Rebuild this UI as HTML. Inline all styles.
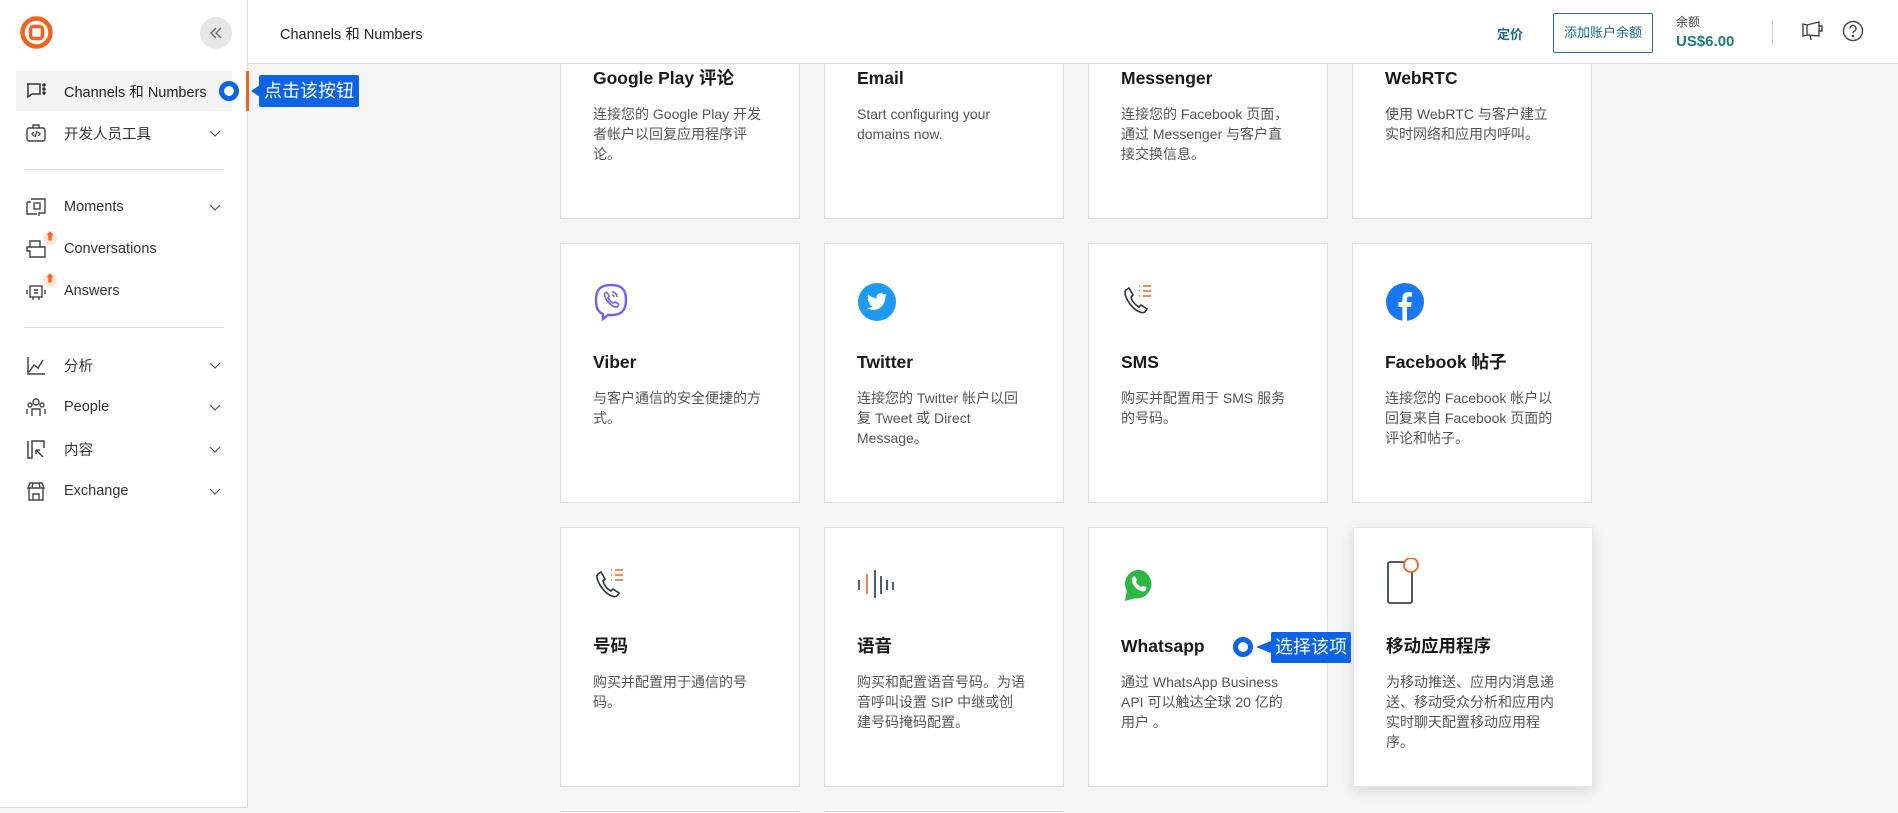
<!DOCTYPE html>
<html style="width:1898px;height:813px;overflow:hidden"><head><meta charset="utf-8"><style>
*{box-sizing:border-box;margin:0;padding:0}
body{width:1898px;height:813px;overflow:hidden;background:#f6f6f6;font-family:"Liberation Sans","Noto Sans CJK SC",sans-serif;color:#222;position:relative}
.side{position:absolute;left:0;top:0;width:248px;height:808px;background:#fff;border-right:1px solid #ddd;border-bottom:1px solid #ddd}
.hdr{position:absolute;left:248px;top:0;right:0;height:64px;background:#fff;border-bottom:1px solid #ddd;z-index:2}
.item{position:absolute;left:16px;width:216px;height:40px;display:flex;align-items:center;font-size:14.5px;color:#333}
.item svg.ic{position:absolute;left:9px;width:22px;height:22px}
.item span{position:absolute;left:48px}
.item .chev{position:absolute;left:192px;width:14px;height:14px}
.div{position:absolute;left:24px;width:200px;height:1px;background:#ddd}
.card{position:absolute;width:240px;height:260px;background:#fff;border:1px solid #ddd;padding:0 32px;overflow:hidden}
.card h3{position:absolute;left:32px;font-size:17.5px;line-height:22px;font-weight:bold;color:#1a1a1a;white-space:nowrap}
.card p{position:absolute;left:32px;width:170px;font-size:14px;line-height:20px;color:#555}
.card svg{position:absolute;left:32px}
</style></head><body>
<div class="side">
 <svg style="position:absolute;left:20px;top:16px" width="33" height="33" viewBox="0 0 33 33"><circle cx="16.5" cy="16.5" r="14" fill="none" stroke="#f26322" stroke-width="4.5"/><rect x="10.5" y="10.5" width="12" height="12" rx="3" fill="none" stroke="#f26322" stroke-width="3.5"/></svg>
 <div style="position:absolute;left:200px;top:17px;width:32px;height:32px;border-radius:50%;background:#e6e6e6"></div>
 <svg style="position:absolute;left:208px;top:25px" width="16" height="16" viewBox="0 0 16 16" fill="none" stroke="#666" stroke-width="1.3"><path d="M8 3L3 8l5 5M13 3L8 8l5 5"/></svg>
 <div class="item" style="top:71px;background:#f3f3f3"><svg class="ic" viewBox="0 0 22 22" fill="none" stroke="#333" stroke-width="1.5"><path d="M2 4h13v10H7l-4 3V4z"/><circle cx="19" cy="5" r="1" fill="#333"/><circle cx="19" cy="9" r="1" fill="#333"/><circle cx="19" cy="13" r="1" fill="#333"/></svg><span style="color:#222">Channels 和 Numbers</span></div>
 <div class="item" style="top:113px"><svg class="ic" viewBox="0 0 22 22" fill="none" stroke="#444" stroke-width="1.4"><rect x="2" y="6" width="18" height="13" rx="2"/><path d="M8 6V3h6v3M9 10l-2 2 2 2M13 10l2 2-2 2M12 9l-2 6"/></svg><span>开发人员工具</span><svg class="chev" viewBox="0 0 14 14" fill="none" stroke="#555" stroke-width="1.2"><path d="M2 5l5 5 5-5"/></svg></div>
 <div class="div" style="top:169px"></div>
 <div class="item" style="top:187px"><svg class="ic" viewBox="0 0 22 22" fill="none" stroke="#444" stroke-width="1.4"><path d="M6 3h14v14h-6v3M2 6h4M2 6v12h10"/><rect x="9" y="7" width="6" height="6"/></svg><span>Moments</span><svg class="chev" viewBox="0 0 14 14" fill="none" stroke="#555" stroke-width="1.2"><path d="M2 5l5 5 5-5"/></svg></div>
 <div class="item" style="top:229px"><svg class="ic" viewBox="0 0 22 22" fill="none" stroke="#444" stroke-width="1.4"><path d="M5 3h10v6H5zM2 9h18v10H5v-6H2z"/></svg><span>Conversations</span></div>
 <div style="position:absolute;left:43px;top:231px;width:14px;height:14px;border-radius:50%;background:#fde5da;color:#f26322;font-size:10px;text-align:center;line-height:13px">⬆</div>
 <div class="item" style="top:271px"><svg class="ic" viewBox="0 0 22 22" fill="none" stroke="#444" stroke-width="1.4"><rect x="5" y="6" width="12" height="11"/><path d="M2 10v4M20 10v4M8 17v3M14 17v3M9 10h4M9 13h4"/></svg><span>Answers</span></div>
 <div style="position:absolute;left:43px;top:273px;width:14px;height:14px;border-radius:50%;background:#fde5da;color:#f26322;font-size:10px;text-align:center;line-height:13px">⬆</div>
 <div class="div" style="top:327px"></div>
 <div class="item" style="top:345px"><svg class="ic" viewBox="0 0 22 22" fill="none" stroke="#444" stroke-width="1.5"><path d="M3 3v17h17M4 18l5-7 4 3 5-8"/></svg><span>分析</span><svg class="chev" viewBox="0 0 14 14" fill="none" stroke="#555" stroke-width="1.2"><path d="M2 5l5 5 5-5"/></svg></div>
 <div class="item" style="top:387px"><svg class="ic" viewBox="0 0 22 22" fill="none" stroke="#444" stroke-width="1.4"><circle cx="11" cy="6" r="3"/><circle cx="5" cy="9" r="2"/><circle cx="17" cy="9" r="2"/><path d="M7 20v-7h8v7M2 18v-5M20 18v-5"/></svg><span>People</span><svg class="chev" viewBox="0 0 14 14" fill="none" stroke="#555" stroke-width="1.2"><path d="M2 5l5 5 5-5"/></svg></div>
 <div class="item" style="top:429px"><svg class="ic" viewBox="0 0 22 22" fill="none" stroke="#444" stroke-width="1.5"><path d="M3 3v17h4V3h12v7M11 12l7 7M11 12h4M11 12v4"/></svg><span>内容</span><svg class="chev" viewBox="0 0 14 14" fill="none" stroke="#555" stroke-width="1.2"><path d="M2 5l5 5 5-5"/></svg></div>
 <div class="item" style="top:471px"><svg class="ic" viewBox="0 0 22 22" fill="none" stroke="#444" stroke-width="1.4"><path d="M3 8l2-5h12l2 5zM4 8v12h14V8M8 20v-6h6v6M8 3l-1 5M14 3l1 5"/></svg><span>Exchange</span><svg class="chev" viewBox="0 0 14 14" fill="none" stroke="#555" stroke-width="1.2"><path d="M2 5l5 5 5-5"/></svg></div>
</div>
<div class="hdr">
 <div style="position:absolute;left:32px;top:23px;font-size:14.5px;color:#222">Channels 和 Numbers</div>
 <div style="position:absolute;left:1249px;top:24px;font-size:13px;font-weight:bold;color:#1f6786">定价</div>
 <div style="position:absolute;left:1305px;top:13px;width:100px;height:40px;border:1.5px solid #2a6f8a;border-radius:2px;font-size:13px;color:#1f6786;text-align:center;line-height:37px">添加账户余额</div>
 <div style="position:absolute;left:1428px;top:13px;font-size:12px;color:#444">余额</div>
 <div style="position:absolute;left:1428px;top:33px;font-size:15px;font-weight:bold;color:#1d7a7a">US$6.00</div>
 <div style="position:absolute;left:1524px;top:21px;width:1px;height:24px;background:#ccc"></div>
 <svg style="position:absolute;left:1553px;top:20px" width="24" height="22" viewBox="0 0 24 22" fill="none" stroke="#444" stroke-width="1.4"><path d="M2 4v12l4-1V5zM6 5l12-3v14L6 15M18 6h3v5h-3M9 15l1 5"/></svg>
 <svg style="position:absolute;left:1594px;top:20px" width="22" height="22" viewBox="0 0 22 22" fill="none" stroke="#444" stroke-width="1.4"><circle cx="11" cy="11" r="9.5"/><path d="M8 8.5a3 3 0 1 1 4 2.8c-.8.4-1 1-1 2"/><circle cx="11" cy="16" r=".6" fill="#444"/></svg>
</div>
<!-- callout 1 -->
<div style="position:absolute;left:246px;top:71px;width:3px;height:40px;background:#f26322"></div>
<div style="position:absolute;left:219px;top:81px;width:20px;height:20px;border-radius:50%;border:5px solid #0b63e5;background:#fff"></div>
<div style="position:absolute;left:251px;top:85px;width:0;height:0;border-top:6px solid transparent;border-bottom:6px solid transparent;border-right:9px solid #0b63e5"></div>
<div style="position:absolute;left:259px;top:75px;width:100px;height:32px;background:#0b63e5;border-radius:2px;color:#fff;font-size:18px;line-height:32px;text-align:center">点击该按钮</div>

<!-- row 1 -->
<div class="card" style="left:560px;top:64px;height:155px;border-top:none"><h3 style="top:3px">Google Play 评论</h3><p style="top:40px">连接您的 Google Play 开发者帐户以回复应用程序评论。</p></div>
<div class="card" style="left:824px;top:64px;height:155px;border-top:none"><h3 style="top:3px">Email</h3><p style="top:40px">Start configuring your domains now.</p></div>
<div class="card" style="left:1088px;top:64px;height:155px;border-top:none"><h3 style="top:3px">Messenger</h3><p style="top:40px">连接您的 Facebook 页面，通过 Messenger 与客户直接交换信息。</p></div>
<div class="card" style="left:1352px;top:64px;height:155px;border-top:none"><h3 style="top:3px">WebRTC</h3><p style="top:40px">使用 WebRTC 与客户建立实时网络和应用内呼叫。</p></div>

<!-- row 2 -->
<div class="card" style="left:560px;top:243px"><svg style="top:38px" width="36" height="40" viewBox="0 0 36 40" fill="none" stroke="#7360f2" stroke-width="2.4"><path d="M18 3c9 0 15 3 15 15s-6 15-15 15h-3l-5 4v-5c-5-2-7-6-7-14C3 6 9 3 18 3z"/><path d="M12 11c1-1 2-1 3 1l1 2-1 2c1 2 3 4 5 5l2-1 2 1c2 1 2 2 1 3-2 2-5 1-9-3s-5-8-4-10zM19 10a5 5 0 0 1 5 5M19 13a2 2 0 0 1 2 2" stroke-width="1.6"/></svg><h3 style="top:107px">Viber</h3><p style="top:144px">与客户通信的安全便捷的方式。</p></div>
<div class="card" style="left:824px;top:243px"><svg style="top:38px" width="40" height="40" viewBox="0 0 40 40"><circle cx="20" cy="20" r="19" fill="#1d9bf0"/><path d="M30 13c-.8.4-1.6.6-2.4.7.9-.5 1.5-1.3 1.8-2.3-.8.5-1.700.8-2.6 1-1.6-1.7-4.4-1.7-6 0-1 1-1.4 2.5-1.1 3.9-3.3-.2-6.4-1.8-8.5-4.3-1.1 1.9-.5 4.3 1.3 5.5-.7 0-1.3-.2-1.9-.5 0 2 1.4 3.7 3.3 4.1-.6.2-1.2.2-1.9.1.5 1.7 2.1 2.9 3.9 2.9-1.7 1.3-3.9 2-6.1 1.8 8.5 5.2 18.7-.4 18.4-11.3.8-.6 1.5-1.3 2-2.1z" fill="#fff"/></svg><h3 style="top:107px">Twitter</h3><p style="top:144px">连接您的 Twitter 帐户以回复 Tweet 或 Direct Message。</p></div>
<div class="card" style="left:1088px;top:243px"><svg style="top:38px" width="36" height="40" viewBox="0 0 36 40" fill="none"><path d="M5 8l3-2 4 7-2 2c1 4 4 8 8 10l2-2 6 4-2 3c-3 2-10-1-15-8S3 10 5 8z" stroke="#2c3440" stroke-width="1.6"/><path d="M22 4h8M22 9h8M22 14h8M18 4h1M18 9h1M18 14h1" stroke="#f26322" stroke-width="1.6"/></svg><h3 style="top:107px">SMS</h3><p style="top:144px">购买并配置用于 SMS 服务的号码。</p></div>
<div class="card" style="left:1352px;top:243px"><svg style="top:38px" width="40" height="40" viewBox="0 0 40 40"><circle cx="20" cy="20" r="19" fill="#1877f2"/><path d="M22 39V25h4l.6-5H22v-3c0-1.4.5-2.4 2.5-2.4H27v-4.3c-.5 0-2-.2-3.6-.2-3.6 0-6 2.2-6 6.2V20h-4v5h4v14z" fill="#fff"/></svg><h3 style="top:107px">Facebook 帖子</h3><p style="top:144px">连接您的 Facebook 帐户以回复来自 Facebook 页面的评论和帖子。</p></div>

<!-- row 3 -->
<div class="card" style="left:560px;top:527px"><svg style="top:38px" width="36" height="40" viewBox="0 0 36 40" fill="none"><path d="M5 8l3-2 4 7-2 2c1 4 4 8 8 10l2-2 6 4-2 3c-3 2-10-1-15-8S3 10 5 8z" stroke="#2c3440" stroke-width="1.6"/><path d="M22 4h8M22 9h8M22 14h8M18 4h1M18 9h1M18 14h1" stroke="#f26322" stroke-width="1.6"/></svg><h3 style="top:107px">号码</h3><p style="top:144px">购买并配置用于通信的号码。</p></div>
<div class="card" style="left:824px;top:527px"><svg style="top:38px" width="40" height="40" viewBox="0 0 40 40" fill="none" stroke-width="1.6"><path d="M2 14v10M18 4v28M30 14v10" stroke="#2c3440"/><path d="M10 8v20" stroke="#f26322"/><path d="M24 10v18M36 16v8" stroke="#2c3440"/></svg><h3 style="top:107px">语音</h3><p style="top:144px">购买和配置语音号码。为语音呼叫设置 SIP 中继或创建号码掩码配置。</p></div>
<div class="card" style="left:1088px;top:527px"><svg style="top:38px" width="36" height="40" viewBox="0 0 36 40"><path d="M18 3a15 15 0 0 0-13 22L3 36l11-3A15 15 0 1 0 18 3z" fill="#2cb742" stroke="#fff" stroke-width="1.5"/><path d="M12 11c1-1 2-1 3 1l1 2-1 2c1 2 3 4 5 5l2-1 3 1c1 1 0 3-1 4-2 1-6 0-9-3s-5-7-4-10z" fill="#fff"/></svg><h3 style="top:107px">Whatsapp</h3><p style="top:144px">通过 WhatsApp Business API 可以触达全球 20 亿的用户 。</p></div>
<div class="card" style="left:1353px;top:527px;border-color:#e6e6e6;box-shadow:0 4px 12px rgba(0,0,0,.14);overflow:visible"><svg style="top:30px" width="40" height="48" viewBox="0 0 40 48" fill="none"><rect x="2" y="4" width="24" height="41" rx="2" stroke="#3d4654" stroke-width="1.8"/><circle cx="25" cy="7" r="7" fill="#fff" stroke="#f26322" stroke-width="1.8"/></svg><h3 style="top:107px">移动应用程序</h3><p style="top:144px">为移动推送、应用内消息递送、移动受众分析和应用内实时聊天配置移动应用程序。</p></div>

<!-- callout 2 -->
<div style="position:absolute;left:1233px;top:637px;width:20px;height:20px;border-radius:50%;border:5px solid #0b63e5;background:#fff"></div>
<div style="position:absolute;left:1256px;top:641px;width:0;height:0;border-top:6px solid transparent;border-bottom:6px solid transparent;border-right:15px solid #0b63e5"></div>
<div style="position:absolute;left:1271px;top:632px;width:80px;height:31px;background:#0b63e5;border-radius:2px;color:#fff;font-size:18px;line-height:31px;text-align:center">选择该项</div>

<!-- row 4 partial -->
<div class="card" style="left:560px;top:811px;height:2px;border-bottom:none"></div>
<div class="card" style="left:824px;top:811px;height:2px;border-bottom:none"></div>
</body></html>
